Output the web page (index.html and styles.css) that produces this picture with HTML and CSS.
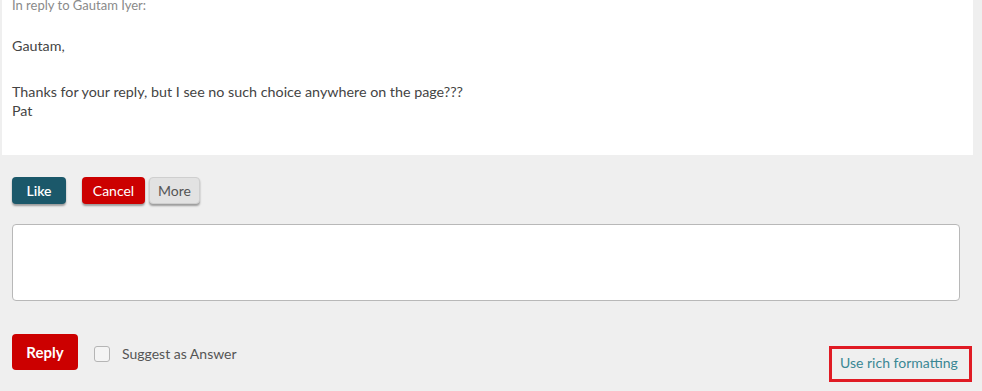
FILE: index.html
```html
<!DOCTYPE html>
<html lang="en">
<head>
  <meta charset="UTF-8" />
  <title>Reply</title>
  <link rel="stylesheet" href="styles.css">
</head>
<body>
  <div class="message">
    <p class="reply-to">In reply to Gautam Iyer:</p>
    <p class="greeting">Gautam,</p>
    <p class="body-text">Thanks for your reply, but I see no such choice anywhere on the page???<br>Pat</p>
  </div>

  <div class="actions">
    <button class="btn btn-like">Like</button>
    <button class="btn btn-cancel">Cancel</button>
    <button class="btn btn-more">More</button>
  </div>

  <div class="composer">
    <textarea class="reply-box"></textarea>
  </div>

  <div class="reply-row">
    <button class="btn btn-reply">Reply</button>
    <label class="suggest">
      <span class="check"></span>
      Suggest as Answer
    </label>
    <div class="rich-link">
      <a href="#">Use rich formatting</a>
    </div>
  </div>
</body>
</html>
```

FILE: styles.css
```css
* {
  margin: 0;
  padding: 0;
  box-sizing: border-box;
}

body {
  font-family: 'Lato', 'Open Sans', sans-serif;
  font-size: 14px;
  color: #444;
  background-color: #efefef;
  height: 391px;
  overflow: hidden;
}

.message {
  display: flow-root;
  background: #fff;
  margin-left: 2px;
  width: 971px;
  height: 155px;
  padding: 0 10px;
  line-height: 19px;
  font-size: 14.3px;
}

.reply-to {
  margin-top: -4px;
  font-size: 13px;
  color: #8a8a8a;
}

.greeting {
  margin-top: 21px;
}

.body-text {
  margin-top: 27px;
}

.actions {
  display: flex;
  padding: 22px 12px 0;
}

.btn {
  font-family: inherit;
  font-size: 14px;
  border: none;
  border-radius: 4px;
  height: 27px;
  cursor: pointer;
  box-shadow: 0 2px 2px rgba(0, 0, 0, 0.35);
}

.btn-like {
  width: 54px;
  background: #1b586a;
  color: #fff;
  font-weight: 600;
}

.btn-cancel {
  width: 63px;
  margin-left: 16px;
  background: #cc0000;
  color: #fff;
}

.btn-more {
  width: 51px;
  margin-left: 4px;
  background: #e2e2e2;
  color: #555;
  border: 1px solid #cfcfcf;
}

.composer {
  padding: 20px 22px 0 12px;
}

.reply-box {
  display: block;
  width: 100%;
  height: 77px;
  border: 1px solid #b8b8b8;
  border-radius: 4px;
  background: #fff;
  resize: none;
}

.reply-row {
  display: flex;
  align-items: flex-start;
  padding: 33px 10px 0 12px;
}

.btn-reply {
  width: 66px;
  height: 36px;
  background: #cc0000;
  color: #fff;
  font-weight: 700;
  font-size: 15px;
  box-shadow: none;
}

.suggest {
  display: flex;
  align-items: center;
  gap: 12px;
  margin-left: 16px;
  margin-top: 11px;
  color: #555;
}

.check {
  width: 16px;
  height: 16px;
  border: 1px solid #b5b5b5;
  border-radius: 3px;
  background: #f4f4f4;
}

.rich-link {
  margin-left: auto;
  margin-top: 12px;
  width: 143px;
  height: 36px;
  border: 3px solid #e01b24;
  padding: 5px 0 0 8px;
}

.rich-link a {
  color: #3a8794;
  text-decoration: none;
}
```
